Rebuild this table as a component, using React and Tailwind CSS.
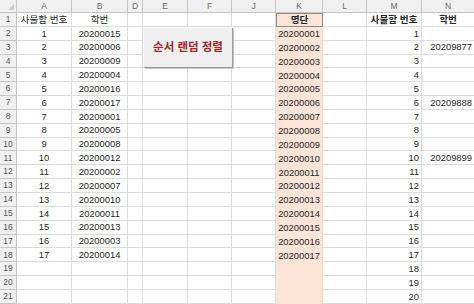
import React from "react";

const COLS = [
  { k: "A", w: 55 },
  { k: "B", w: 56 },
  { k: "D", w: 15 },
  { k: "E", w: 45 },
  { k: "F", w: 44 },
  { k: "J", w: 44 },
  { k: "K", w: 47 },
  { k: "L", w: 44 },
  { k: "M", w: 55 },
  { k: "N", w: 53 },
];

const B = [
  "20200015","20200006","20200009","20200004","20200016","20200017","20200001","20200005","20200008",
  "20200012","20200002","20200007","20200010","20200011","20200013","20200003","20200014",
];
const N = { 3: "20209877", 7: "20209888", 11: "20209899" };

function cellData(r, k) {
  if (r === 1) {
    if (k === "A") return { t: "사물함 번호", a: "center" };
    if (k === "B") return { t: "학번", a: "center" };
    if (k === "K") return { t: "명단", a: "center", b: true };
    if (k === "M") return { t: "사물함 번호", a: "center", b: true };
    if (k === "N") return { t: "학번", a: "center", b: true };
    return null;
  }
  const i = r - 2;
  if (k === "A" && i < 17) return { t: String(i + 1), a: "center" };
  if (k === "B" && i < 17) return { t: B[i], a: "center" };
  if (k === "K" && i < 17) return { t: String(20200001 + i), a: "center" };
  if (k === "M" && i < 20) return { t: String(i + 1), a: "right" };
  if (k === "N" && N[r]) return { t: N[r], a: "right" };
  return null;
}

export default function App() {
  const rows = Array.from({ length: 21 }, (_, i) => i + 1);
  return (
    <div
      className="relative w-[474px] h-[304px] overflow-hidden bg-white text-[#262626] text-[9.4px] leading-none"
      style={{ fontFamily: '"Liberation Sans", "Noto Sans CJK KR", sans-serif' }}
    >
      <div className="flex h-[13px]">
        <div className="relative w-[17px] shrink-0 bg-[#f0f0f0] border-r border-b border-[#c5c5c5]">
          <div className="absolute right-[2px] bottom-[2px] w-0 h-0 border-l-[6px] border-l-transparent border-b-[6px] border-b-[#c9c9c9]" />
        </div>
        {COLS.map((c) => (
          <div
            key={c.k}
            style={{ width: c.w }}
            className="shrink-0 flex items-center justify-center bg-[#f0f0f0] border-r border-b border-[#c5c5c5] text-[8.5px] text-[#6a6a6a]"
          >
            {c.k}
          </div>
        ))}
      </div>
      {rows.map((r) => (
        <div key={r} className="flex h-[13.857px]">
          <div className="w-[17px] shrink-0 flex items-center justify-center bg-[#f0f0f0] border-r border-b border-[#c5c5c5] text-[8.5px] text-[#555]">
            {r}
          </div>
          {COLS.map((c) => {
            const d = cellData(r, c.k);
            const isK = c.k === "K";
            let cls = "shrink-0 flex items-center px-[2px] whitespace-nowrap ";
            if (isK && r === 1) cls += "bg-[#fce4d6] border border-[#8c8c8c] ";
            else if (isK) cls += "bg-[#fce4d6] border-r border-[#f3d8c8] ";
            else cls += "border-r border-b border-[#dcdcdc] ";
            if (d) cls += d.a === "right" ? "justify-end " : "justify-center ";
            if (d && d.b) cls += "font-bold ";
            if (r === 1 && d) cls += "text-[9.6px] ";
            return (
              <div key={c.k} style={{ width: c.w }} className={cls}>
                {d ? d.t : null}
              </div>
            );
          })}
        </div>
      ))}
      <div className="absolute left-[143px] top-[27px] w-[89px] h-[40px] flex items-center justify-center bg-[#efefef] border-t border-l border-[#f8f8f8] shadow-[1px_1px_0_#9a9a9a,2px_2px_0_#c8c8c8] text-[11.5px] font-bold text-[#a1262d]">
        순서 랜덤 정렬
      </div>
    </div>
  );
}
